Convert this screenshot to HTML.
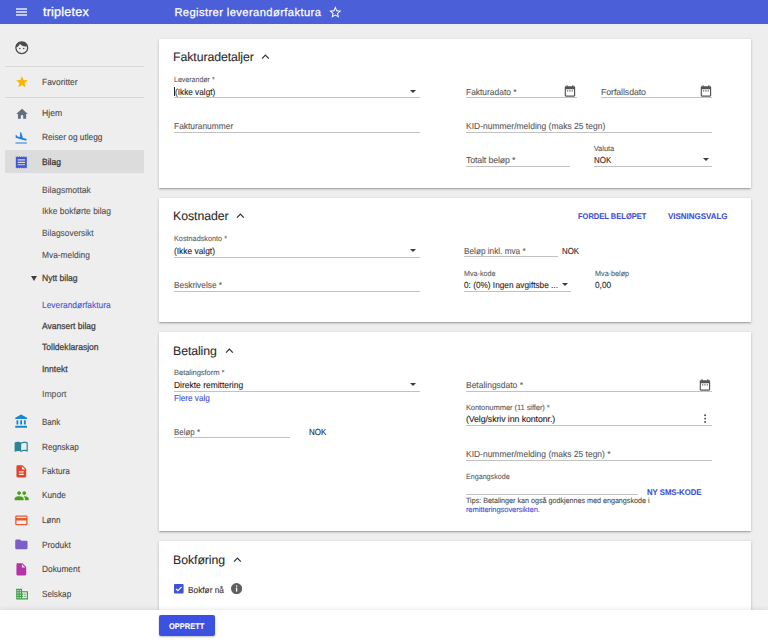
<!DOCTYPE html>
<html><head><meta charset="utf-8"><style>
html,body{margin:0;padding:0;width:768px;height:640px;overflow:hidden;background:#eeeeee;font-family:"Liberation Sans",sans-serif;}
.t{position:absolute;white-space:nowrap;line-height:0;-webkit-text-stroke:0.1px currentColor;text-rendering:geometricPrecision;}
</style></head><body>
<div style="position:absolute;left:0px;top:0px;width:768px;height:24px;background:#4a5fd8"></div>
<div style="position:absolute;left:16px;top:8px;width:11px;height:2px;background:#bfc7f1"></div>
<div style="position:absolute;left:16px;top:11px;width:11px;height:2px;background:#bfc7f1"></div>
<div style="position:absolute;left:16px;top:14px;width:11px;height:2px;background:#bfc7f1"></div>
<div class="t" style="left:42.90px;top:12.40px;font-size:12.6px;color:#fff;font-weight:normal;letter-spacing:0.238px;-webkit-text-stroke:0.3px #fff;">tripletex</div>
<div class="t" style="left:174.40px;top:13.10px;font-size:11.2px;color:#fff;font-weight:normal;letter-spacing:0.398px;-webkit-text-stroke:0.25px currentColor;">Registrer leverandørfaktura</div>
<svg style="position:absolute;left:328.3px;top:4.6px" width="14.64" height="14.64" viewBox="0 0 24 24"><path fill="#fff" d="M22 9.24l-7.19-.62L12 2 9.19 8.63 2 9.24l5.46 4.73L5.82 21 12 17.27 18.18 21l-1.63-7.03L22 9.24zM12 15.4l-3.76 2.27 1-4.28-3.32-2.88 4.38-.38L12 6.1l1.71 4.04 4.38.38-3.32 2.88 1 4.28L12 15.4z"/></svg>
<svg style="position:absolute;left:13.8px;top:39.6px" width="15.6" height="15.6" viewBox="0 0 24 24"><path fill="#4a4a4a" d="M9 11.75c-.69 0-1.25.56-1.25 1.25s.56 1.25 1.25 1.25 1.25-.56 1.25-1.25-.56-1.25-1.25-1.25zm6 0c-.69 0-1.25.56-1.25 1.25s.56 1.25 1.25 1.25 1.25-.56 1.25-1.25-.56-1.25-1.25-1.25zM12 2C6.48 2 2 6.48 2 12s4.48 10 10 10 10-4.48 10-10S17.52 2 12 2zm0 18c-4.41 0-8-3.59-8-8 0-.29.02-.58.05-.86 2.36-1.05 4.23-2.98 5.21-5.37C11.07 8.33 14.05 10 17.42 10c.78 0 1.53-.09 2.25-.26.21.71.33 1.47.33 2.26 0 4.41-3.59 8-8 8z"/></svg>
<div style="position:absolute;left:5px;top:66px;width:139px;height:1px;background:#d8d8d8"></div>
<svg style="position:absolute;left:14.7px;top:75.4px" width="13.92" height="13.92" viewBox="0 0 24 24"><path fill="#fbb400" d="M12 17.27L18.18 21l-1.64-7.03L22 9.24l-7.19-.61L12 2 9.19 8.63 2 9.24l5.46 4.73L5.82 21z"/></svg>
<div class="t" style="left:41.70px;top:82.10px;font-size:9px;color:#484848;font-weight:normal;letter-spacing:0.000px;transform:scaleX(0.9366);transform-origin:0 0;">Favoritter</div>
<div style="position:absolute;left:5px;top:97px;width:139px;height:1px;background:#d8d8d8"></div>
<svg style="position:absolute;left:14.7px;top:106.7px" width="14.04" height="14.04" viewBox="0 0 24 24"><path fill="#5f7080" d="M10 20v-6h4v6h5v-8h3L12 3 2 12h3v8z"/></svg>
<div class="t" style="left:41.80px;top:112.90px;font-size:9px;color:#484848;font-weight:normal;letter-spacing:0.000px;transform:scaleX(0.9608);transform-origin:0 0;">Hjem</div>
<svg style="position:absolute;left:14.4px;top:131px" width="14.4" height="14.4" viewBox="0 0 24 24"><path fill="#1f7fe0" d="M2.5 19h19v2h-19zm7.18-5.73l4.35 1.16 5.31 1.42c.8.21 1.62-.26 1.84-1.06.21-.8-.26-1.62-1.06-1.84l-5.31-1.42-2.76-9.02L10.12 2v8.28L5.15 8.95l-.93-2.32-1.45-.39v5.17l1.6.43 5.31 1.43z"/></svg>
<div class="t" style="left:41.70px;top:136.90px;font-size:9px;color:#484848;font-weight:normal;letter-spacing:0.000px;transform:scaleX(0.9216);transform-origin:0 0;">Reiser og utlegg</div>
<div style="position:absolute;left:5px;top:149.7px;width:139px;height:23.8px;background:#dcdcdc"></div>
<svg style="position:absolute;left:14.2px;top:154.7px" width="14.64" height="14.64" viewBox="0 0 24 24"><path fill="#3f55dc" d="M18 17H6v-2h12v2zm0-4H6v-2h12v2zm0-4H6V7h12v2zM3 22l1.5-1.5L6 22l1.5-1.5L9 22l1.5-1.5L12 22l1.5-1.5L15 22l1.5-1.5L18 22l1.5-1.5L21 22V2l-1.5 1.5L18 2l-1.5 1.5L15 2l-1.5 1.5L12 2l-1.5 1.5L9 2 7.5 3.5 6 2 4.5 3.5 3 2v20z"/></svg>
<div class="t" style="left:41.80px;top:161.80px;font-size:9px;color:#333;font-weight:normal;letter-spacing:0.000px;transform:scaleX(0.9447);transform-origin:0 0;-webkit-text-stroke:0.25px currentColor;">Bilag</div>
<div class="t" style="left:42.30px;top:189.80px;font-size:9px;color:#505050;font-weight:normal;letter-spacing:0.000px;transform:scaleX(0.9477);transform-origin:0 0;">Bilagsmottak</div>
<div class="t" style="left:42.30px;top:211.40px;font-size:9px;color:#505050;font-weight:normal;letter-spacing:0.000px;transform:scaleX(0.9384);transform-origin:0 0;">Ikke bokførte bilag</div>
<div class="t" style="left:42.30px;top:233.40px;font-size:9px;color:#505050;font-weight:normal;letter-spacing:0.000px;transform:scaleX(0.9300);transform-origin:0 0;">Bilagsoversikt</div>
<div class="t" style="left:42.30px;top:255.20px;font-size:9px;color:#505050;font-weight:normal;letter-spacing:0.000px;transform:scaleX(0.9299);transform-origin:0 0;">Mva-melding</div>
<div style="position:absolute;left:30.5px;top:275.6px;width:0;height:0;border-left:3.1px solid transparent;border-right:3.1px solid transparent;border-top:5px solid #404040"></div>
<div class="t" style="left:42.40px;top:277.80px;font-size:9px;color:#404040;font-weight:normal;letter-spacing:0.000px;transform:scaleX(0.9491);transform-origin:0 0;-webkit-text-stroke:0.25px currentColor;">Nytt bilag</div>
<div class="t" style="left:42.30px;top:304.50px;font-size:9px;color:#4355d8;font-weight:normal;letter-spacing:0.000px;transform:scaleX(0.9329);transform-origin:0 0;">Leverandørfaktura</div>
<div class="t" style="left:42.30px;top:325.70px;font-size:9px;color:#404040;font-weight:normal;letter-spacing:0.000px;transform:scaleX(0.9461);transform-origin:0 0;-webkit-text-stroke:0.25px currentColor;">Avansert bilag</div>
<div class="t" style="left:42.30px;top:347.30px;font-size:9px;color:#404040;font-weight:normal;letter-spacing:0.000px;transform:scaleX(0.9508);transform-origin:0 0;-webkit-text-stroke:0.25px currentColor;">Tolldeklarasjon</div>
<div class="t" style="left:42.30px;top:369.10px;font-size:9px;color:#404040;font-weight:normal;letter-spacing:0.000px;transform:scaleX(0.9485);transform-origin:0 0;-webkit-text-stroke:0.25px currentColor;">Inntekt</div>
<div class="t" style="left:42.30px;top:393.70px;font-size:9px;color:#585858;font-weight:normal;letter-spacing:0.000px;transform:scaleX(0.9613);transform-origin:0 0;">Import</div>
<svg style="position:absolute;left:14.36px;top:414.3px" width="14.88" height="14.88" viewBox="0 0 24 24"><path fill="#1c86cc" d="M4 10v7h3v-7H4zm6 0v7h3v-7h-3zM2 22h19v-3H2v3zm14-12v7h3v-7h-3zm-4.5-9L2 6v2h19V6l-9.5-5z"/></svg>
<div class="t" style="left:41.80px;top:421.80px;font-size:9px;color:#484848;font-weight:normal;letter-spacing:0.000px;transform:scaleX(0.8899);transform-origin:0 0;">Bank</div>
<svg style="position:absolute;left:14.3px;top:439.2px" width="14.4" height="14.4" viewBox="0 0 24 24"><path fill="#2a8499" d="M21 5c-1.11-.35-2.33-.5-3.5-.5-1.95 0-4.05.4-5.5 1.5-1.45-1.1-3.55-1.5-5.5-1.5S2.45 4.9 1 6v14.65c0 .25.25.5.5.5.1 0 .15-.05.25-.05C3.1 20.45 5.05 20 6.5 20c1.95 0 4.05.4 5.5 1.5 1.35-.85 3.8-1.5 5.5-1.5 1.65 0 3.35.3 4.75 1.05.1.05.15.05.25.05.25 0 .5-.25.5-.5V6c-.6-.45-1.25-.75-2-1zm0 13.5c-1.1-.35-2.3-.5-3.5-.5-1.7 0-4.15.65-5.5 1.5V8c1.35-.85 3.8-1.5 5.5-1.5 1.2 0 2.4.15 3.5.5v11.5z"/></svg>
<div class="t" style="left:41.80px;top:447.00px;font-size:9px;color:#484848;font-weight:normal;letter-spacing:0.000px;transform:scaleX(0.9057);transform-origin:0 0;">Regnskap</div>
<svg style="position:absolute;left:14.46px;top:463.6px" width="14.64" height="14.64" viewBox="0 0 24 24"><path fill="#e2432e" d="M14 2H6c-1.1 0-1.99.9-1.99 2L4 20c0 1.1.89 2 1.99 2H18c1.1 0 2-.9 2-2V8l-6-6zm2 16H8v-2h8v2zm0-4H8v-2h8v2zm-3-5V3.5L18.5 9H13z"/></svg>
<div class="t" style="left:41.80px;top:470.70px;font-size:9px;color:#484848;font-weight:normal;letter-spacing:0.000px;transform:scaleX(0.9113);transform-origin:0 0;">Faktura</div>
<svg style="position:absolute;left:14.16px;top:488.1px" width="15.36" height="15.36" viewBox="0 0 24 24"><path fill="#46a21a" d="M16 11c1.66 0 2.99-1.34 2.99-3S17.66 5 16 5c-1.66 0-3 1.34-3 3s1.34 3 3 3zm-8 0c1.66 0 2.99-1.34 2.99-3S9.66 5 8 5C6.34 5 5 6.34 5 8s1.34 3 3 3zm0 2c-2.33 0-7 1.17-7 3.5V19h14v-2.5c0-2.33-4.67-3.5-7-3.5zm8 0c-.29 0-.62.02-.97.05 1.16.84 1.97 1.970 1.97 3.45V19h6v-2.5c0-2.33-4.67-3.5-7-3.5z"/></svg>
<div class="t" style="left:41.80px;top:495.40px;font-size:9px;color:#484848;font-weight:normal;letter-spacing:0.000px;transform:scaleX(0.9147);transform-origin:0 0;">Kunde</div>
<svg style="position:absolute;left:14.27px;top:512.5px" width="14.76" height="14.76" viewBox="0 0 24 24"><path fill="#e55a2e" d="M20 4H4c-1.11 0-1.99.89-1.99 2L2 18c0 1.11.89 2 2 2h16c1.11 0 2-.89 2-2V6c0-1.11-.89-2-2-2zm0 14H4v-6h16v6zm0-10H4V6h16v2z"/></svg>
<div class="t" style="left:41.80px;top:520.00px;font-size:9px;color:#484848;font-weight:normal;letter-spacing:0.000px;transform:scaleX(0.8972);transform-origin:0 0;">Lønn</div>
<svg style="position:absolute;left:14.27px;top:537.3px" width="14.76" height="14.76" viewBox="0 0 24 24"><path fill="#7c5ec8" d="M10 4H4c-1.1 0-1.99.9-1.99 2L2 18c0 1.1.9 2 2 2h16c1.1 0 2-.9 2-2V8c0-1.1-.9-2-2-2h-8l-2-2z"/></svg>
<div class="t" style="left:41.80px;top:544.60px;font-size:9px;color:#484848;font-weight:normal;letter-spacing:0.000px;transform:scaleX(0.9265);transform-origin:0 0;">Produkt</div>
<svg style="position:absolute;left:14.46px;top:562px" width="14.64" height="14.64" viewBox="0 0 24 24"><path fill="#b631aa" d="M6 2c-1.1 0-1.99.9-1.99 2L4 20c0 1.1.89 2 1.99 2H18c1.1 0 2-.9 2-2V8l-6-6H6zm7 7V3.5L18.5 9H13z"/></svg>
<div class="t" style="left:41.80px;top:569.20px;font-size:9px;color:#484848;font-weight:normal;letter-spacing:0.000px;transform:scaleX(0.9249);transform-origin:0 0;">Dokument</div>
<svg style="position:absolute;left:14.62px;top:586.9px" width="14.16" height="14.16" viewBox="0 0 24 24"><path fill="#3d9e47" d="M12 7V3H2v18h20V7H12zM6 19H4v-2h2v2zm0-4H4v-2h2v2zm0-4H4V9h2v2zm0-4H4V5h2v2zm4 12H8v-2h2v2zm0-4H8v-2h2v2zm0-4H8V9h2v2zm0-4H8V5h2v2zm10 12h-8v-2h2v-2h-2v-2h2v-2h-2V9h8v10zm-2-8h-2v2h2v-2zm0 4h-2v2h2v-2z"/></svg>
<div class="t" style="left:41.80px;top:593.80px;font-size:9px;color:#484848;font-weight:normal;letter-spacing:0.000px;transform:scaleX(0.9121);transform-origin:0 0;">Selskap</div>
<div style="position:absolute;left:159.3px;top:38.7px;width:591.8px;height:149.3px;background:#fff;box-shadow:0 1px 3px rgba(0,0,0,.2),0 1px 1px rgba(0,0,0,.1),0 2px 1px -1px rgba(0,0,0,.08)"></div>
<div style="position:absolute;left:159.3px;top:197.6px;width:591.8px;height:124.6px;background:#fff;box-shadow:0 1px 3px rgba(0,0,0,.2),0 1px 1px rgba(0,0,0,.1),0 2px 1px -1px rgba(0,0,0,.08)"></div>
<div style="position:absolute;left:159.3px;top:332px;width:591.8px;height:199px;background:#fff;box-shadow:0 1px 3px rgba(0,0,0,.2),0 1px 1px rgba(0,0,0,.1),0 2px 1px -1px rgba(0,0,0,.08)"></div>
<div style="position:absolute;left:159.3px;top:540.8px;width:591.8px;height:120px;background:#fff;box-shadow:0 1px 3px rgba(0,0,0,.2),0 1px 1px rgba(0,0,0,.1),0 2px 1px -1px rgba(0,0,0,.08)"></div>
<div class="t" style="left:173.10px;top:56.80px;font-size:12.3px;color:#2a2a2a;font-weight:normal;letter-spacing:-0.091px;">Fakturadetaljer</div>
<svg style="position:absolute;left:261.1px;top:53.8px" width="9" height="6" viewBox="0 0 9 6"><path d="M1 4.6L4.4 1.1 7.8 4.6" fill="none" stroke="#333" stroke-width="1.25"/></svg>
<div class="t" style="left:174.00px;top:80.20px;font-size:7.6px;color:#5e5e5e;font-weight:normal;letter-spacing:0.000px;transform:scaleX(0.9262);transform-origin:0 0;">Leverandør *</div>
<div class="t" style="left:174.70px;top:91.70px;font-size:8.8px;color:#1e1e1e;font-weight:normal;letter-spacing:0.000px;transform:scaleX(0.9353);transform-origin:0 0;">(Ikke valgt)</div>
<div style="position:absolute;left:174.4px;top:87px;width:0.8px;height:9px;background:#222"></div>
<div style="position:absolute;left:410.2px;top:90.1px;width:0;height:0;border-left:3px solid transparent;border-right:3px solid transparent;border-top:3.2px solid #3a3a3a"></div>
<div style="position:absolute;left:174.4px;top:96.8px;width:245.4px;height:1px;background:#c2c2c2"></div>
<div class="t" style="left:174.00px;top:125.90px;font-size:8.8px;color:#5a5a5a;font-weight:normal;letter-spacing:0.000px;transform:scaleX(0.9541);transform-origin:0 0;">Fakturanummer</div>
<div style="position:absolute;left:174.4px;top:131.8px;width:245.4px;height:1px;background:#c2c2c2"></div>
<div class="t" style="left:465.90px;top:91.50px;font-size:8.8px;color:#5a5a5a;font-weight:normal;letter-spacing:0.000px;transform:scaleX(0.9571);transform-origin:0 0;">Fakturadato *</div>
<svg style="position:absolute;left:563.1999999999999px;top:84.3px" width="13.92" height="13.92" viewBox="0 0 24 24"><path fill="#555" d="M9 11H7v2h2v-2zm4 0h-2v2h2v-2zm4 0h-2v2h2v-2zm2-7h-1V2h-2v2H8V2H6v2H5c-1.11 0-1.99.9-1.99 2L3 20c0 1.1.89 2 2 2h14c1.1 0 2-.9 2-2V6c0-1.1-.9-2-2-2zm0 16H5V9h14v11z"/></svg>
<div style="position:absolute;left:466.3px;top:97.3px;width:110.5px;height:1px;background:#c2c2c2"></div>
<div class="t" style="left:601.00px;top:91.50px;font-size:8.8px;color:#5a5a5a;font-weight:normal;letter-spacing:-0.088px;">Forfallsdato</div>
<svg style="position:absolute;left:698.6px;top:84.3px" width="13.92" height="13.92" viewBox="0 0 24 24"><path fill="#555" d="M9 11H7v2h2v-2zm4 0h-2v2h2v-2zm4 0h-2v2h2v-2zm2-7h-1V2h-2v2H8V2H6v2H5c-1.11 0-1.99.9-1.99 2L3 20c0 1.1.89 2 2 2h14c1.1 0 2-.9 2-2V6c0-1.1-.9-2-2-2zm0 16H5V9h14v11z"/></svg>
<div style="position:absolute;left:601.4px;top:97.3px;width:111.1px;height:1px;background:#c2c2c2"></div>
<div class="t" style="left:465.90px;top:126.10px;font-size:8.8px;color:#5a5a5a;font-weight:normal;letter-spacing:0.000px;transform:scaleX(0.9654);transform-origin:0 0;">KID-nummer/melding (maks 25 tegn)</div>
<div style="position:absolute;left:466.3px;top:131.9px;width:245.7px;height:1px;background:#c2c2c2"></div>
<div class="t" style="left:465.90px;top:160.00px;font-size:8.8px;color:#5a5a5a;font-weight:normal;letter-spacing:-0.140px;">Totalt beløp *</div>
<div style="position:absolute;left:466.3px;top:165.6px;width:103.5px;height:1px;background:#c2c2c2"></div>
<div class="t" style="left:593.70px;top:148.80px;font-size:7.6px;color:#5e5e5e;font-weight:normal;letter-spacing:-0.069px;">Valuta</div>
<div class="t" style="left:593.70px;top:160.00px;font-size:8.8px;color:#1e1e1e;font-weight:normal;letter-spacing:0.000px;transform:scaleX(0.9013);transform-origin:0 0;">NOK</div>
<div style="position:absolute;left:703.0px;top:158.10000000000002px;width:0;height:0;border-left:3px solid transparent;border-right:3px solid transparent;border-top:3.2px solid #3a3a3a"></div>
<div style="position:absolute;left:594.1px;top:165.6px;width:118.4px;height:1px;background:#c2c2c2"></div>
<div class="t" style="left:173.10px;top:215.90px;font-size:12.3px;color:#2a2a2a;font-weight:normal;letter-spacing:-0.058px;">Kostnader</div>
<svg style="position:absolute;left:236.3px;top:213px" width="9" height="6" viewBox="0 0 9 6"><path d="M1 4.6L4.4 1.1 7.8 4.6" fill="none" stroke="#333" stroke-width="1.25"/></svg>
<div class="t" style="left:577.90px;top:217.30px;font-size:8.2px;color:#3f51d6;font-weight:bold;letter-spacing:0.000px;transform:scaleX(0.9183);transform-origin:0 0;">FORDEL BELØPET</div>
<div class="t" style="left:668.00px;top:217.30px;font-size:8.2px;color:#3f51d6;font-weight:bold;letter-spacing:0.000px;transform:scaleX(0.9706);transform-origin:0 0;">VISNINGSVALG</div>
<div class="t" style="left:174.00px;top:238.90px;font-size:7.6px;color:#5e5e5e;font-weight:normal;letter-spacing:0.000px;transform:scaleX(0.9576);transform-origin:0 0;">Kostnadskonto *</div>
<div class="t" style="left:174.00px;top:250.80px;font-size:8.8px;color:#1e1e1e;font-weight:normal;letter-spacing:0.000px;transform:scaleX(0.9515);transform-origin:0 0;">(Ikke valgt)</div>
<div style="position:absolute;left:410.2px;top:249.3px;width:0;height:0;border-left:3px solid transparent;border-right:3px solid transparent;border-top:3.2px solid #3a3a3a"></div>
<div style="position:absolute;left:174.4px;top:257px;width:245.4px;height:1px;background:#c2c2c2"></div>
<div class="t" style="left:174.00px;top:285.40px;font-size:8.8px;color:#5a5a5a;font-weight:normal;letter-spacing:0.000px;transform:scaleX(0.9451);transform-origin:0 0;">Beskrivelse *</div>
<div style="position:absolute;left:174.4px;top:291px;width:245.4px;height:1px;background:#c2c2c2"></div>
<div class="t" style="left:463.80px;top:250.80px;font-size:8.8px;color:#5a5a5a;font-weight:normal;letter-spacing:0.000px;transform:scaleX(0.9343);transform-origin:0 0;">Beløp inkl. mva *</div>
<div style="position:absolute;left:464.2px;top:256.2px;width:93.5px;height:1px;background:#c2c2c2"></div>
<div class="t" style="left:562.40px;top:251.20px;font-size:8.8px;color:#1e1e1e;font-weight:normal;letter-spacing:0.000px;transform:scaleX(0.8961);transform-origin:0 0;">NOK</div>
<div class="t" style="left:463.80px;top:273.70px;font-size:7.6px;color:#5e5e5e;font-weight:normal;letter-spacing:0.000px;transform:scaleX(0.9421);transform-origin:0 0;">Mva-kode</div>
<div class="t" style="left:463.80px;top:284.90px;font-size:8.8px;color:#1e1e1e;font-weight:normal;letter-spacing:0.000px;transform:scaleX(0.9369);transform-origin:0 0;">0: (0%) Ingen avgiftsbe ...</div>
<div style="position:absolute;left:562.2px;top:283.0px;width:0;height:0;border-left:3px solid transparent;border-right:3px solid transparent;border-top:3.2px solid #3a3a3a"></div>
<div style="position:absolute;left:464.2px;top:290.5px;width:107.3px;height:1px;background:#c2c2c2"></div>
<div class="t" style="left:595.40px;top:273.70px;font-size:7.6px;color:#5e5e5e;font-weight:normal;letter-spacing:0.000px;transform:scaleX(0.9510);transform-origin:0 0;">Mva-beløp</div>
<div class="t" style="left:595.40px;top:284.90px;font-size:8.8px;color:#1e1e1e;font-weight:normal;letter-spacing:0.000px;transform:scaleX(0.9403);transform-origin:0 0;">0,00</div>
<div class="t" style="left:173.10px;top:350.90px;font-size:12.3px;color:#2a2a2a;font-weight:normal;letter-spacing:-0.100px;">Betaling</div>
<svg style="position:absolute;left:224.6px;top:348px" width="9" height="6" viewBox="0 0 9 6"><path d="M1 4.6L4.4 1.1 7.8 4.6" fill="none" stroke="#333" stroke-width="1.25"/></svg>
<div class="t" style="left:174.00px;top:372.80px;font-size:7.6px;color:#5e5e5e;font-weight:normal;letter-spacing:-0.081px;">Betalingsform *</div>
<div class="t" style="left:174.00px;top:384.70px;font-size:8.8px;color:#1e1e1e;font-weight:normal;letter-spacing:0.000px;transform:scaleX(0.9615);transform-origin:0 0;">Direkte remittering</div>
<div style="position:absolute;left:410.2px;top:383.1px;width:0;height:0;border-left:3px solid transparent;border-right:3px solid transparent;border-top:3.2px solid #3a3a3a"></div>
<div style="position:absolute;left:174.4px;top:390.7px;width:245.4px;height:1px;background:#c2c2c2"></div>
<div class="t" style="left:174.00px;top:397.60px;font-size:8.8px;color:#3f51d6;font-weight:normal;letter-spacing:0.000px;transform:scaleX(0.9269);transform-origin:0 0;">Flere valg</div>
<div class="t" style="left:174.00px;top:431.60px;font-size:8.8px;color:#5a5a5a;font-weight:normal;letter-spacing:0.000px;transform:scaleX(0.9006);transform-origin:0 0;">Beløp *</div>
<div style="position:absolute;left:174.4px;top:436.9px;width:115.6px;height:1px;background:#c2c2c2"></div>
<div class="t" style="left:309.00px;top:431.60px;font-size:8.8px;color:#1e1e1e;font-weight:normal;letter-spacing:0.000px;transform:scaleX(0.9065);transform-origin:0 0;">NOK</div>
<div class="t" style="left:465.90px;top:385.20px;font-size:8.8px;color:#5a5a5a;font-weight:normal;letter-spacing:0.000px;transform:scaleX(0.9623);transform-origin:0 0;">Betalingsdato *</div>
<svg style="position:absolute;left:697.8px;top:377.9px" width="13.92" height="13.92" viewBox="0 0 24 24"><path fill="#555" d="M9 11H7v2h2v-2zm4 0h-2v2h2v-2zm4 0h-2v2h2v-2zm2-7h-1V2h-2v2H8V2H6v2H5c-1.11 0-1.99.9-1.99 2L3 20c0 1.1.89 2 2 2h14c1.1 0 2-.9 2-2V6c0-1.1-.9-2-2-2zm0 16H5V9h14v11z"/></svg>
<div style="position:absolute;left:466.3px;top:390.8px;width:245.4px;height:1px;background:#c2c2c2"></div>
<div class="t" style="left:465.90px;top:408.10px;font-size:7.6px;color:#5e5e5e;font-weight:normal;letter-spacing:-0.099px;">Kontonummer (11 siffer) *</div>
<div class="t" style="left:465.90px;top:419.30px;font-size:8.8px;color:#1e1e1e;font-weight:normal;letter-spacing:-0.088px;">(Velg/skriv inn kontonr.)</div>
<svg style="position:absolute;left:700px;top:410px" width="10" height="16" viewBox="0 0 10 16"><circle cx="5.1" cy="5.3" r="0.95" fill="#444"/><circle cx="5.1" cy="8.6" r="0.95" fill="#444"/><circle cx="5.1" cy="11.9" r="0.95" fill="#444"/></svg>
<div style="position:absolute;left:466.3px;top:424.7px;width:245.4px;height:1px;background:#c2c2c2"></div>
<div class="t" style="left:465.90px;top:454.10px;font-size:8.8px;color:#5a5a5a;font-weight:normal;letter-spacing:0.000px;transform:scaleX(0.9631);transform-origin:0 0;">KID-nummer/melding (maks 25 tegn) *</div>
<div style="position:absolute;left:466.3px;top:460px;width:245.4px;height:1px;background:#c2c2c2"></div>
<div class="t" style="left:465.90px;top:476.70px;font-size:7.6px;color:#5e5e5e;font-weight:normal;letter-spacing:0.000px;transform:scaleX(0.9390);transform-origin:0 0;">Engangskode</div>
<div style="position:absolute;left:466.3px;top:493.7px;width:171.5px;height:1px;background:#c2c2c2"></div>
<div class="t" style="left:647.40px;top:492.70px;font-size:8.2px;color:#3f51d6;font-weight:bold;letter-spacing:0.000px;transform:scaleX(0.9449);transform-origin:0 0;">NY SMS-KODE</div>
<div class="t" style="left:465.90px;top:500.70px;font-size:7.6px;color:#4a4a4a;font-weight:normal;letter-spacing:0.000px;transform:scaleX(0.9422);transform-origin:0 0;">Tips: Betalinger kan også godkjennes med engangskode i</div>
<div class="t" style="left:465.90px;top:510.00px;font-size:7.6px;color:#3f51d6;font-weight:normal;letter-spacing:-0.108px;">remitteringsoversikten.</div>
<div class="t" style="left:173.10px;top:559.70px;font-size:12.3px;color:#2a2a2a;font-weight:normal;letter-spacing:-0.073px;">Bokføring</div>
<svg style="position:absolute;left:232.7px;top:556.8px" width="9" height="6" viewBox="0 0 9 6"><path d="M1 4.6L4.4 1.1 7.8 4.6" fill="none" stroke="#333" stroke-width="1.25"/></svg>
<svg style="position:absolute;left:174.2px;top:584.3px" width="9.6" height="9.6" viewBox="0 0 18 18"><rect width="18" height="18" rx="2" fill="#3f51d6"/><path d="M3.8 9.2l3.5 3.4 7-7.1" fill="none" stroke="#fff" stroke-width="2.2"/></svg>
<div class="t" style="left:188.30px;top:589.80px;font-size:8.8px;color:#333;font-weight:normal;letter-spacing:0.000px;transform:scaleX(0.9414);transform-origin:0 0;">Bokfør nå</div>
<svg style="position:absolute;left:230.6px;top:583.3px" width="11.2" height="11.2" viewBox="0 0 22 22"><circle cx="11" cy="11" r="11" fill="#5f5f5f"/><rect x="9.7" y="9.2" width="2.6" height="7.6" fill="#fff"/><circle cx="11" cy="6.1" r="1.5" fill="#fff"/></svg>
<div style="position:absolute;left:0px;top:610px;width:768px;height:30px;background:#fff;box-shadow:0 -1px 5px rgba(0,0,0,.09)"></div>
<div style="position:absolute;left:159.2px;top:614.7px;width:55.6px;height:21.4px;background:#3b52e0;border-radius:2px;box-shadow:0 1px 2px rgba(0,0,0,.25)"></div>
<div class="t" style="left:168.80px;top:625.90px;font-size:8.4px;color:#fff;font-weight:bold;letter-spacing:0.000px;transform:scaleX(0.8952);transform-origin:0 0;">OPPRETT</div>
</body></html>
